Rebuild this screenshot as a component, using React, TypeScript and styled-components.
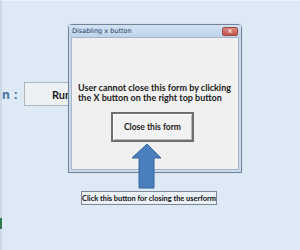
import React from "react";
import styled, { createGlobalStyle } from "styled-components";

const Global = createGlobalStyle`
  html, body { margin: 0; padding: 0; }
  body { width: 300px; height: 250px; overflow: hidden; background: #dde9f4; }
`;

const Page = styled.div`
  position: relative;
  width: 300px;
  height: 250px;
  background: #dde9f4;
  border-top: 1px solid #eef4fa;
  border-left: 2px solid #cbd9e6;
  box-sizing: border-box;
  font-family: Lato, "Open Sans", sans-serif;
`;

const FormRow = styled.div`
  display: flex;
  align-items: center;
  gap: 8px;
  padding-top: 81px;
`;

const Label = styled.span`
  font-family: "Open Sans", sans-serif;
  font-weight: 700;
  font-size: 12px;
  color: #4a72a4;
  width: 14px;
  white-space: nowrap;
  letter-spacing: 0.5px;
`;

const RunBox = styled.div`
  width: 60px;
  height: 22px;
  background: #eef1f4;
  border: 1px solid #aeb7c2;
  display: flex;
  align-items: center;
  padding-left: 27px;
  font-family: Lato, sans-serif;
  font-weight: 700;
  font-size: 11px;
  color: #1a1a1a;
`;

const Marker = styled.div`
  position: absolute;
  left: -2px;
  top: 217px;
  width: 2px;
  height: 11px;
  background: #2f7a4e;
`;

const Window = styled.div`
  position: absolute;
  left: 66px;
  top: 23px;
  width: 174px;
  height: 149px;
  box-sizing: border-box;
  border: 1px solid #72839a;
  border-radius: 4px 4px 0 0;
  background: #c9daee;
  padding: 0 2px 2px 2px;
  display: flex;
  flex-direction: column;
  box-shadow: 0 0 1px rgba(60, 80, 110, 0.3);
`;

const TitleBar = styled.div`
  height: 12px;
  display: flex;
  align-items: center;
  justify-content: space-between;
  background: linear-gradient(#d3e2f3, #bfd3ea);
  margin: 0 -2px;
  padding: 0 3px 0 3px;
`;

const Title = styled.span`
  font-family: "DejaVu Sans", sans-serif;
  font-size: 6.5px;
  color: #1f3a66;
`;

const CloseX = styled.div`
  width: 16px;
  height: 9px;
  border-radius: 2px;
  background: linear-gradient(#e08a80, #c4534a);
  border: 1px solid #9b4a44;
  box-sizing: border-box;
  display: flex;
  align-items: center;
  justify-content: center;
  color: #fff;
  font-size: 6px;
  font-family: "DejaVu Sans", sans-serif;
  font-weight: 700;
  line-height: 1;
`;

const Body = styled.div`
  flex: 1;
  background: #f0f0f0;
  border: 1px solid #a7b5c6;
  display: flex;
  flex-direction: column;
  align-items: flex-start;
  padding: 45px 0 0 6px;
`;

const Message = styled.p`
  margin: 0;
  font-family: Lato, sans-serif;
  font-weight: 700;
  font-size: 9px;
  line-height: 10px;
  color: #1a1a1a;
  white-space: nowrap;
`;

const CloseButton = styled.button`
  margin: 9px 0 0 33px;
  width: 83px;
  height: 30px;
  box-sizing: border-box;
  background: #f2f2f2;
  border: 2px solid #6f6f6f;
  box-shadow: inset 1px 1px 0 #ffffff, inset -1px -1px 0 #b8b8b8;
  font-family: Lato, sans-serif;
  font-weight: 700;
  font-size: 8.5px;
  color: #1a1a1a;
  padding: 0;
`;

const Arrow = styled.svg`
  position: absolute;
  left: 129px;
  top: 142px;
`;

const Callout = styled.div`
  position: absolute;
  left: 79px;
  top: 190px;
  width: 136px;
  height: 14px;
  box-sizing: border-box;
  border: 1px solid #7d8896;
  background: #eaf0f6;
  display: flex;
  align-items: center;
  justify-content: center;
  font-family: Lato, sans-serif;
  font-weight: 700;
  font-size: 7.4px;
  color: #111;
  white-space: nowrap;
`;

export default function App() {
  return (
    <>
      <Global />
      <Page>
        <FormRow>
          <Label>n :</Label>
          <RunBox>Run</RunBox>
        </FormRow>
        <Marker />
        <Window>
          <TitleBar>
            <Title>Disabling x button</Title>
            <CloseX>×</CloseX>
          </TitleBar>
          <Body>
            <Message>
              User cannot close this form by clicking
              <br />
              the X button on the right top button
            </Message>
            <CloseButton>Close this form</CloseButton>
          </Body>
        </Window>
        <Arrow width="32" height="48" viewBox="0 0 32 48">
          <path
            d="M16 1 L30 15 L23 15 L23 45 L8 45 L8 15 L1 15 Z"
            fill="#4a7ebd"
            stroke="#35669e"
            strokeWidth="1"
          />
        </Arrow>
        <Callout>Click this button for closing the userform</Callout>
      </Page>
    </>
  );
}
